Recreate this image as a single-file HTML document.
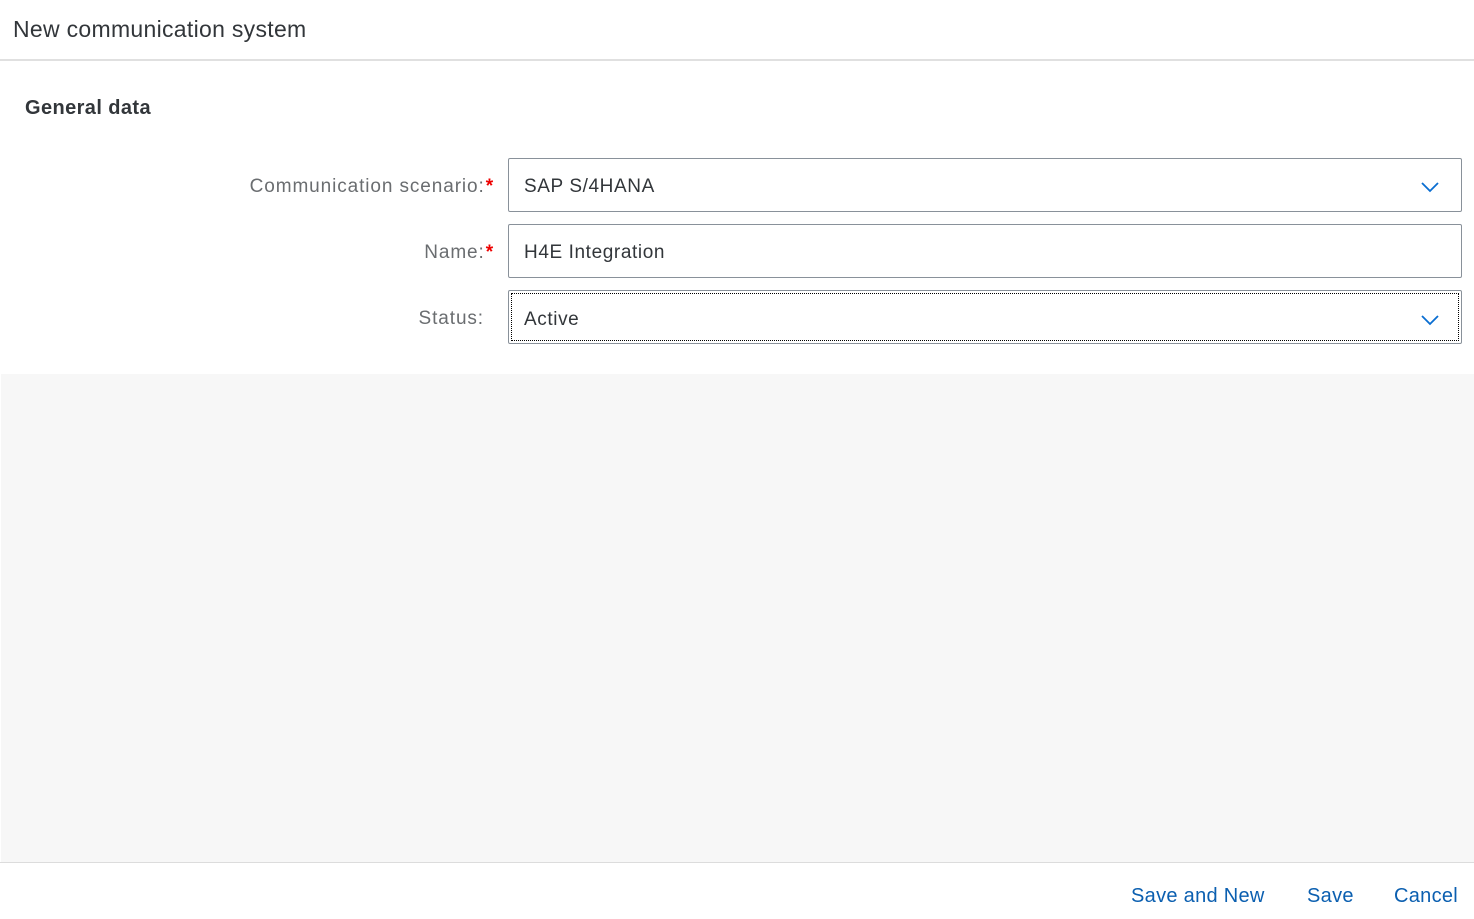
<!DOCTYPE html>
<html><head><meta charset="utf-8"><style>
*{box-sizing:border-box;margin:0;padding:0}
body{width:1474px;height:919px;background:#fff;font-family:"Liberation Sans",sans-serif;position:relative;overflow:hidden;color:#32363a}
.hdr{position:absolute;left:0;top:0;width:1474px;height:61px;border-bottom:2px solid #e0e0e0}
.hdr span{position:absolute;left:13px;top:16px;font-size:23px;letter-spacing:0.3px;color:#32363a}
.gd{position:absolute;left:25px;top:97px;font-size:20px;letter-spacing:0.4px;font-weight:bold;color:#32363a}
.lbl{position:absolute;right:980px;font-size:19px;letter-spacing:0.9px;color:#6a6d70;white-space:nowrap}
.lbl b{color:#e00;font-weight:bold;margin-left:1px}
.in{position:absolute;left:508px;width:954px;height:54px;border:1px solid #89919a;border-radius:2px;background:#fff}
.in span{position:absolute;left:15px;top:17px;font-size:19px;letter-spacing:0.6px;color:#32363a}
.in svg{position:absolute;right:22px;top:22px}
.foc::after{content:"";position:absolute;left:2px;top:2px;right:2px;bottom:2px;border:1px dotted #000}
.gray{position:absolute;left:1px;top:374px;width:1473px;height:488px;background:#f7f7f7}
.ftr{position:absolute;left:0;top:862px;width:1474px;height:57px;border-top:1px solid #dcdcdc;background:#fff}
.btn{position:absolute;top:22px;font-size:20px;letter-spacing:0.3px;color:#0b5fb0}
</style></head><body>
<div class="hdr"><span>New communication system</span></div>
<div class="gd">General data</div>
<div class="lbl" style="top:176px">Communication scenario:<b>*</b></div>
<div class="in" style="top:158px"><span>SAP S/4HANA</span><svg width="18" height="12" viewBox="0 0 18 12"><path d="M1 2 L9 10 L17 2" fill="none" stroke="#0a6ed1" stroke-width="1.8"/></svg></div>
<div class="lbl" style="top:242px">Name:<b>*</b></div>
<div class="in" style="top:224px"><span>H4E Integration</span></div>
<div class="lbl" style="top:308px;right:990px">Status:</div>
<div class="in foc" style="top:290px"><span style="top:18px">Active</span><svg width="18" height="12" viewBox="0 0 18 12" style="top:23px"><path d="M1 2 L9 10 L17 2" fill="none" stroke="#0a6ed1" stroke-width="1.8"/></svg></div>
<div class="gray"></div>
<div class="ftr">
<span class="btn" style="left:1131px">Save and New</span>
<span class="btn" style="left:1307px">Save</span>
<span class="btn" style="left:1394px">Cancel</span>
</div>
</body></html>
